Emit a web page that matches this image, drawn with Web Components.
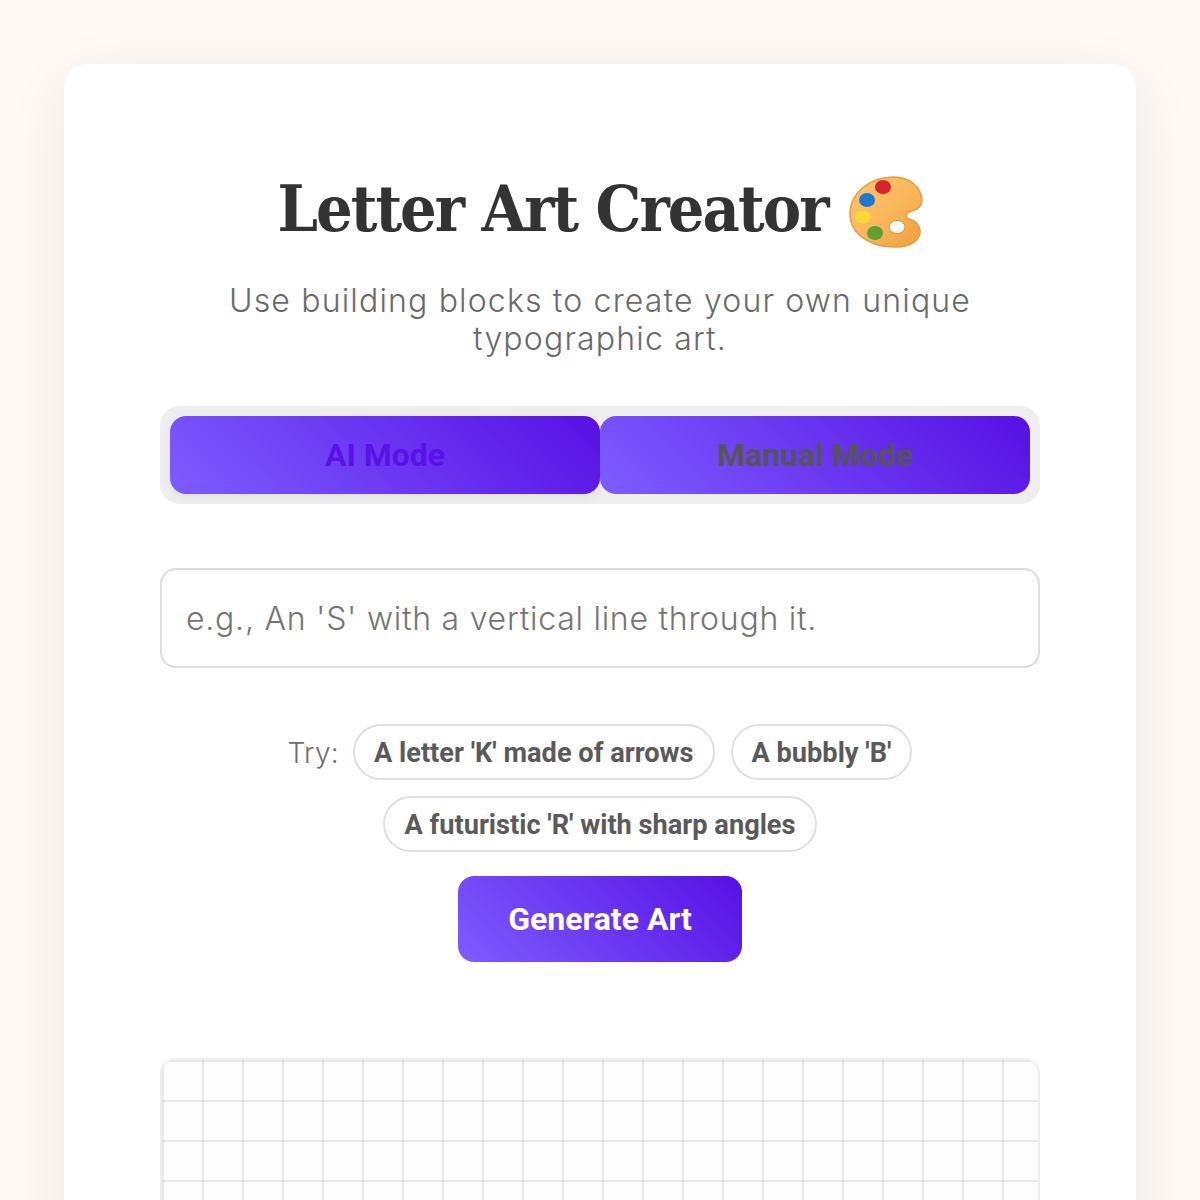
<!DOCTYPE html>
<html lang="en">
<head>
<meta charset="UTF-8">
<title>Letter Art Creator</title>
<style>
  html, body { margin: 0; height: 1200px; overflow: hidden; background: #fff9f5; }
  body { padding: 64px 64px 0; box-sizing: border-box; font-family: "Roboto", sans-serif; }
</style>
</head>
<body>
<art-card>
  <art-header title-text="Letter Art Creator" subtitle="Use building blocks to create your own unique typographic art."></art-header>
  <mode-tabs></mode-tabs>
  <prompt-input placeholder="e.g., An 'S' with a vertical line through it."></prompt-input>
  <try-row>
    <try-chip>A letter 'K' made of arrows</try-chip>
    <try-chip>A bubbly 'B'</try-chip>
    <try-chip>A futuristic 'R' with sharp angles</try-chip>
  </try-row>
  <generate-button>Generate Art</generate-button>
  <grid-canvas></grid-canvas>
</art-card>

<script>
  const GRADIENT = "linear-gradient(45deg, #7d5dff 0%, #5710e4 100%)";

  class ArtCard extends HTMLElement {
    constructor() {
      super();
      this.attachShadow({ mode: "open" }).innerHTML = `
        <style>
          :host {
            display: flex; flex-direction: column; box-sizing: border-box;
            width: 1072px; height: 1400px; padding: 96px 96px 0;
            background: #fff; border-radius: 24px;
            box-shadow: 0 16px 64px rgba(0,0,0,.07);
          }
        </style>
        <slot></slot>`;
    }
  }

  class ArtHeader extends HTMLElement {
    constructor() {
      super();
      const root = this.attachShadow({ mode: "open" });
      root.innerHTML = `
        <style>
          :host { display: block; text-align: center; }
          h1 {
            margin: 0; height: 96px; display: flex; justify-content: center; align-items: center; gap: 21px;
            font: 700 64px/96px "DejaVu Serif Condensed", "DejaVu Serif", serif; font-stretch: condensed;
            letter-spacing: -1.9px; color: #333;
          }
          #t { margin-top: 2px; }
          svg { width: 74px; height: 74px; flex: none; margin-top: 9px; }
          p {
            margin: 26px auto 0; width: 800px;
            font: 300 32px/38px "Inter", sans-serif; letter-spacing: 1.17px; color: #6a6a6a;
          }
        </style>
        <h1><span id="t"></span>
          <svg viewBox="0 0 74 74">
            <defs>
              <linearGradient id="wood" x1="0" y1="0" x2="1" y2="1">
                <stop offset="0" stop-color="#fcc872"/><stop offset=".6" stop-color="#f7b457"/><stop offset="1" stop-color="#ee9d3a"/>
              </linearGradient>
            </defs>
            <path d="M1 36C2 16 22 1 44 1 60 1 72 10 73 24c0 8-7 10-13 12-4 2-4 6 0 7 6 1 12 7 11 14-1 8-11 14-23 14C25 72 0 60 1 36z" fill="url(#wood)" stroke="#e39c44" stroke-width="1.5"/>
            <ellipse cx="34" cy="11" rx="8" ry="7" fill="#d8232f"/>
            <ellipse cx="18" cy="24" rx="8" ry="7" fill="#1f77d0"/>
            <ellipse cx="14" cy="41" rx="8" ry="6.5" fill="#fdd835"/>
            <ellipse cx="26" cy="57" rx="8" ry="7" fill="#5f9e2f"/>
            <ellipse cx="48" cy="51" rx="8" ry="6.5" fill="#fff" stroke="#d98f35"/>
          </svg>
        </h1>
        <p id="s"></p>`;
      root.getElementById("t").textContent = this.getAttribute("title-text");
      root.getElementById("s").textContent = this.getAttribute("subtitle");
    }
  }

  class ModeTabs extends HTMLElement {
    constructor() {
      super();
      this.attachShadow({ mode: "open" }).innerHTML = `
        <style>
          :host {
            display: grid; grid-template-columns: 1fr 1fr; box-sizing: border-box;
            height: 98px; margin-top: 48px; padding: 10px;
            background: #eee; border-radius: 20px;
          }
          div {
            display: flex; align-items: center; justify-content: center;
            background: ${GRADIENT}; border-radius: 16px;
            font: 700 32px "Roboto", sans-serif;
          }
          .on { color: #5a10e6; box-shadow: 0 4px 12px rgba(0,0,0,.05); }
          .off { color: #555; }
        </style>
        <div class="on">AI Mode</div>
        <div class="off">Manual Mode</div>`;
    }
  }

  class PromptInput extends HTMLElement {
    constructor() {
      super();
      const root = this.attachShadow({ mode: "open" });
      root.innerHTML = `
        <style>
          :host { display: block; margin-top: 64px; }
          input {
            display: block; box-sizing: border-box; width: 100%; height: 100px; padding: 0 24px;
            border: 2px solid #ddd; border-radius: 16px; background: #fff; outline: none;
            font: 300 32px "Inter", sans-serif; letter-spacing: .75px; color: #333;
          }
          input::placeholder { color: #757575; opacity: 1; }
        </style>
        <input type="text">`;
      root.querySelector("input").placeholder = this.getAttribute("placeholder");
    }
  }

  class TryRow extends HTMLElement {
    constructor() {
      super();
      this.attachShadow({ mode: "open" }).innerHTML = `
        <style>
          :host {
            display: flex; flex-wrap: wrap; justify-content: center; align-items: center;
            gap: 16px; margin-top: 56px;
          }
          span { font: 300 28px "Inter", sans-serif; letter-spacing: .3px; color: #6e6e6e; padding-top: 1px; margin-right: -2px; }
        </style>
        <span>Try:</span><slot></slot>`;
    }
  }

  class TryChip extends HTMLElement {
    constructor() {
      super();
      this.attachShadow({ mode: "open" }).innerHTML = `
        <style>
          :host {
            display: flex; align-items: center; box-sizing: border-box; height: 56px; padding: 2px 19px 0;
            border: 2px solid #e0e0e0; border-radius: 28px; background: #fff;
            font: 700 27.2px "Roboto", sans-serif; color: #5a5a5a;
          }
        </style>
        <slot></slot>`;
    }
  }

  class GenerateButton extends HTMLElement {
    constructor() {
      super();
      this.attachShadow({ mode: "open" }).innerHTML = `
        <style>
          :host {
            display: flex; align-items: center; justify-content: center; align-self: center;
            width: 284px; height: 86px; margin-top: 24px;
            background: ${GRADIENT}; border-radius: 16px;
            font: 700 32px "Roboto", sans-serif; color: #fff;
          }
        </style>
        <slot></slot>`;
    }
  }

  class GridCanvas extends HTMLElement {
    constructor() {
      super();
      this.attachShadow({ mode: "open" }).innerHTML = `
        <style>
          :host {
            display: block; box-sizing: border-box; height: 400px; margin-top: 96px;
            border: 2px solid #eee; border-radius: 16px; background-color: #fdfdfd;
            background-image:
              linear-gradient(to right, rgba(0,0,0,.08) 2px, transparent 2px),
              linear-gradient(to bottom, rgba(0,0,0,.08) 2px, transparent 2px);
            background-size: 40px 40px;
            background-position: 0 0;
          }
        </style>`;
    }
  }

  customElements.define("art-card", ArtCard);
  customElements.define("art-header", ArtHeader);
  customElements.define("mode-tabs", ModeTabs);
  customElements.define("prompt-input", PromptInput);
  customElements.define("try-row", TryRow);
  customElements.define("try-chip", TryChip);
  customElements.define("generate-button", GenerateButton);
  customElements.define("grid-canvas", GridCanvas);
</script>
</body>
</html>
